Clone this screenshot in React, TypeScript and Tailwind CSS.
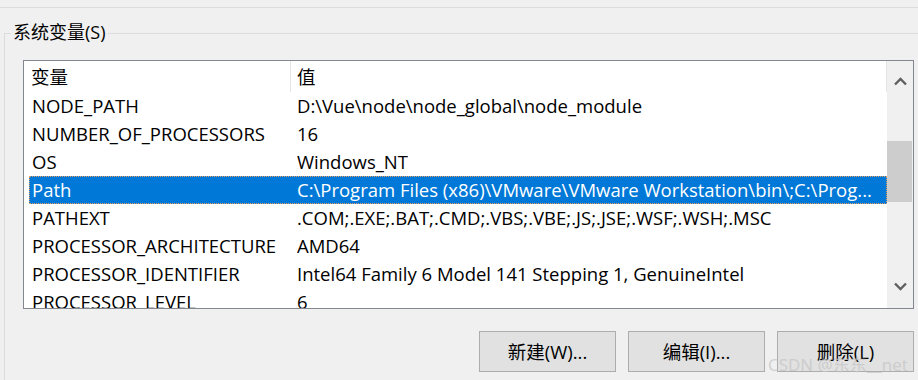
const rows = [
  { name: "NODE_PATH", value: "D:\\Vue\\node\\node_global\\node_module" },
  { name: "NUMBER_OF_PROCESSORS", value: "16" },
  { name: "OS", value: "Windows_NT" },
  {
    name: "Path",
    value:
      "C:\\Program Files (x86)\\VMware\\VMware Workstation\\bin\\;C:\\Prog...",
    selected: true,
  },
  { name: "PATHEXT", value: ".COM;.EXE;.BAT;.CMD;.VBS;.VBE;.JS;.JSE;.WSF;.WSH;.MSC" },
  { name: "PROCESSOR_ARCHITECTURE", value: "AMD64" },
  {
    name: "PROCESSOR_IDENTIFIER",
    value: "Intel64 Family 6 Model 141 Stepping 1, GenuineIntel",
  },
  { name: "PROCESSOR_LEVEL", value: "6" },
];

const font = {
  fontFamily: '"Open Sans", "Noto Sans CJK SC", sans-serif',
};

function Chevron({ down }: { down?: boolean }) {
  return (
    <svg width="13" height="9" viewBox="0 0 13 9" className="block">
      <path
        d={down ? "M1 1.5 L6.5 7 L12 1.5" : "M1 7.5 L6.5 2 L12 7.5"}
        fill="none"
        stroke="#606060"
        strokeWidth="2.4"
      />
    </svg>
  );
}

function Button({ label }: { label: string }) {
  return (
    <button className="flex h-[41px] w-[137px] items-center justify-center border border-[#adadad] bg-[#e1e1e1] text-[18.5px] text-black">
      {label}
    </button>
  );
}

export default function App() {
  return (
    <div
      className="relative h-[380px] w-[918px] overflow-hidden bg-[#f0f0f0]"
      style={font}
    >
      <div className="h-[8px] border-b border-[#dcdcdc]" />

      <div className="relative ml-[4px] mt-[25px] h-[400px] border-l border-t border-[#dcdcdc] pl-[18px] pt-[26px]">
        <span className="absolute left-[6px] top-[-16px] bg-[#f0f0f0] px-[2px] text-[18px] leading-[28px] text-black">
          系统变量(S)
        </span>

        <div className="flex h-[249px] w-[891px] border border-[#828790] bg-white">
          <div className="flex-1 overflow-hidden">
            <div className="flex h-[31px] items-center text-[18.5px] text-black">
              <div className="flex h-full w-[267px] items-center border-r border-[#e5e5e5] pl-[7px]">
                变量
              </div>
              <div className="flex h-full flex-1 items-center border-r border-[#e5e5e5] pl-[6px]">
                值
              </div>
            </div>
            {rows.map((r) => (
              <div
                key={r.name}
                className={
                  r.selected
                    ? "ml-[5px] flex h-[28px] items-center whitespace-nowrap bg-[#0078d7] text-[18.5px] text-white outline-1 -outline-offset-1 outline-dotted outline-[#e0a060]"
                    : "ml-[5px] flex h-[28px] items-center whitespace-nowrap text-[18.5px] text-black"
                }
              >
                <div className="w-[268px] shrink-0 pl-[3px]">{r.name}</div>
                <div className="overflow-hidden">{r.value}</div>
              </div>
            ))}
          </div>

          <div className="flex w-[26px] flex-col bg-[#f0f0f0]">
            <div className="flex h-[28px] items-end justify-center pb-[3px]">
              <Chevron />
            </div>
            <div className="h-[52px]" />
            <div className="mr-[1px] h-[61px] bg-[#cdcdcd]" />
            <div className="flex-1" />
            <div className="flex h-[30px] items-start justify-center pt-[4px]">
              <Chevron down />
            </div>
          </div>
        </div>

        <div className="mt-[22px] flex w-[891px] justify-end gap-[12px]">
          <Button label="新建(W)..." />
          <Button label="编辑(I)..." />
          <Button label="删除(L)" />
        </div>
      </div>

      <span className="absolute left-[768px] top-[352px] text-[17px] text-[#c4c4c4] opacity-70">
        CSDN @东东__net
      </span>
    </div>
  );
}
